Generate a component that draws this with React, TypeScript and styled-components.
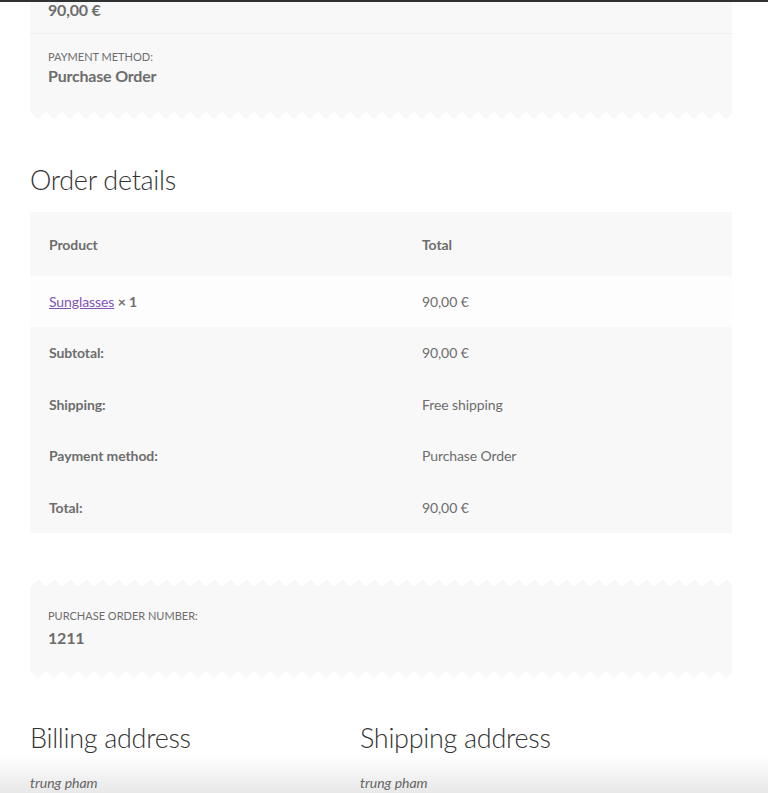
import React from "react";
import styled, { createGlobalStyle } from "styled-components";

const bg = "#f8f8f8";

const GlobalStyle = createGlobalStyle`
  html, body {
    margin: 0;
    padding: 0;
    background: #fff;
  }
  body {
    font-family: "Lato", "Open Sans", sans-serif;
    font-size: 14px;
    color: #6d6d6d;
  }
  * {
    box-sizing: border-box;
  }
`;

const TopEdge = styled.div`
  height: 2px;
  background: #2f3133;
`;

const Page = styled.main`
  padding: 0 36px 60px 30px;
`;

const Zigzag = styled.div<{ $edge: "top" | "bottom" }>`
  height: 7px;
  background: ${(p) =>
      p.$edge === "bottom"
        ? `conic-gradient(from -45deg at 50% 100%, ${bg} 90deg, transparent 0)`
        : `conic-gradient(from 135deg at 50% 0%, ${bg} 90deg, transparent 0)`}
    0 0 / 16px 8px repeat-x;
  background-position: ${(p) => (p.$edge === "bottom" ? "0 100%" : "0 0")};
`;

const Overview = styled.ul`
  list-style: none;
  margin: 0;
  padding: 0;
  background: ${bg};
`;

const OverviewItem = styled.li<{ $first?: boolean }>`
  padding: ${(p) => (p.$first ? "0 18px 15px" : "15px 18px 26px")};
  border-bottom: ${(p) => (p.$first ? "1px solid #efefef" : "none")};
  font-size: 11px;
  text-transform: uppercase;
  line-height: 15px;
`;

const OverviewValue = styled.strong<{ $gap?: number; $tight?: boolean }>`
  display: block;
  margin-top: ${(p) => p.$gap ?? 0}px;
  font-size: 16px;
  line-height: ${(p) => (p.$tight ? "16px" : "20px")};
  font-weight: 700;
  text-transform: none;
  color: #6d6d6d;
  letter-spacing: -0.2px;
`;

const Heading = styled.h2`
  margin: 44px 0 15px;
  font-size: 27px;
  font-weight: 300;
  line-height: 1.25;
  color: #333;
  letter-spacing: -0.3px;
`;

const Table = styled.div`
  display: grid;
  grid-template-columns: 373px 1fr;
`;

const Cell = styled.div<{ $tone: "head" | "body" | "foot"; $bold?: boolean }>`
  background: ${(p) => (p.$tone === "body" ? "#fdfdfd" : bg)};
  padding: ${(p) => (p.$tone === "head" ? "23px 19px" : "16px 19px")};
  height: ${(p) => (p.$tone === "head" ? "64px" : "51.5px")};
  font-size: 14px;
  line-height: 19px;
  font-weight: ${(p) => (p.$bold ? 700 : 400)};
  letter-spacing: -0.1px;
`;

const ProductLink = styled.a`
  color: #7f54b3;
  text-decoration: underline;
  font-weight: 400;
`;

const Qty = styled.strong`
  font-weight: 700;
`;

const PoBox = styled.section`
  margin-top: 46px;
`;

const PoBody = styled.div`
  background: ${bg};
  padding: 22px 18px 23px;
  font-size: 11px;
  line-height: 15px;
  text-transform: uppercase;
`;

const Addresses = styled.div`
  display: grid;
  grid-template-columns: 330px 1fr;
  margin-top: 21px;
`;

const AddressHeading = styled(Heading)`
  margin: 22px 0 17px;
`;

const Address = styled.address`
  font-style: italic;
  font-size: 14px;
  line-height: 1.6;
`;

const BottomShade = styled.div`
  position: fixed;
  left: 0;
  right: 0;
  bottom: 0;
  height: 38px;
  pointer-events: none;
  background: linear-gradient(to bottom, rgba(0, 0, 0, 0), rgba(0, 0, 0, 0.09));
`;

const rows: { label: string; value: string }[] = [
  { label: "Subtotal:", value: "90,00 €" },
  { label: "Shipping:", value: "Free shipping" },
  { label: "Payment method:", value: "Purchase Order" },
  { label: "Total:", value: "90,00 €" },
];

export default function App() {
  return (
    <>
      <GlobalStyle />
      <TopEdge />
      <Page>
        <Overview>
          <OverviewItem $first>
            <OverviewValue $tight>90,00 €</OverviewValue>
          </OverviewItem>
          <OverviewItem>
            Payment method:
            <OverviewValue $gap={2}>Purchase Order</OverviewValue>
          </OverviewItem>
        </Overview>
        <Zigzag $edge="bottom" />

        <Heading>Order details</Heading>
        <Table>
          <Cell $tone="head" $bold>Product</Cell>
          <Cell $tone="head" $bold>Total</Cell>
          <Cell $tone="body">
            <ProductLink href="#">Sunglasses</ProductLink> <Qty>× 1</Qty>
          </Cell>
          <Cell $tone="body">90,00 €</Cell>
          {rows.map((r) => (
            <React.Fragment key={r.label}>
              <Cell $tone="foot" $bold>{r.label}</Cell>
              <Cell $tone="foot">{r.value}</Cell>
            </React.Fragment>
          ))}
        </Table>

        <PoBox>
          <Zigzag $edge="top" />
          <PoBody>
            Purchase order number:
            <OverviewValue $gap={5}>1211</OverviewValue>
          </PoBody>
          <Zigzag $edge="bottom" />
        </PoBox>

        <Addresses>
          <div>
            <AddressHeading>Billing address</AddressHeading>
            <Address>trung pham</Address>
          </div>
          <div>
            <AddressHeading>Shipping address</AddressHeading>
            <Address>trung pham</Address>
          </div>
        </Addresses>
      </Page>
      <BottomShade />
    </>
  );
}
